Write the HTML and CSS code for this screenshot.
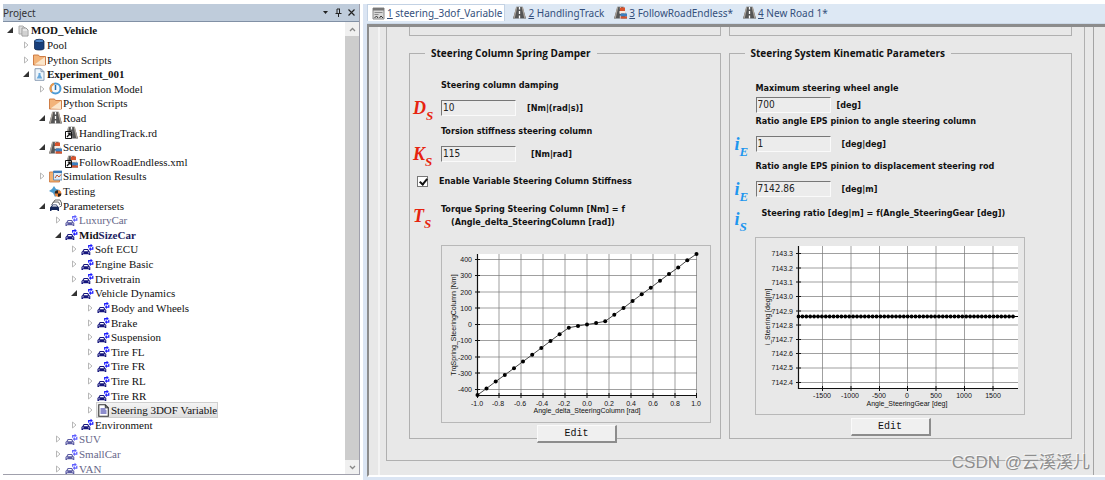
FILE: index.html
```html
<!DOCTYPE html>
<html lang="en">
<head>
<meta charset="utf-8">
<title>steering_3dof_Variable</title>
<link rel="stylesheet" href="styles.css">
</head>
<body>
<svg class="defs" aria-hidden="true">
  <defs>
    <symbol id="open" viewBox="0 0 10 10"><path d="M8 2v6H2z" fill="#333"/></symbol>
    <symbol id="closed" viewBox="0 0 10 10"><path d="M3.5 2v6L7 5z" fill="#fff" stroke="#b0b0b0" stroke-width=".9"/></symbol>
    <symbol id="docs" viewBox="0 0 13 13"><path d="M2 2h4l2 2v6H2z" fill="#ddd" stroke="#aaa"/><path d="M5 4h4l2 2v6H5z" fill="#e8e8e8" stroke="#999"/><path d="M7 7v4M9 7v4" stroke="#bbb"/></symbol>
    <symbol id="pool" viewBox="0 0 13 13"><path d="M1.500 3v7.500c0 2 9.500 2 9.500 0V3z" fill="#173f7c" stroke="#12284f" stroke-width=".8"/><ellipse cx="6.250" cy="3" rx="4.700" ry="1.700" fill="#4c86cc" stroke="#12284f" stroke-width=".8"/></symbol>
    <symbol id="folder" viewBox="0 0 13 13"><path d="M.5 2h5l1 1.500h6V12H.5z" fill="#f3b47a" stroke="#c9743a" stroke-width=".9"/><path d="M1.500 11.500L12 4v8z" fill="#fbe6cb"/></symbol>
    <symbol id="exp" viewBox="0 0 13 13"><path d="M2 .7h6l3 3v8.600H2z" fill="#eef5fb" stroke="#8a9db5"/><path d="M8 .7v3h3" fill="none" stroke="#8a9db5"/><path d="M5.500 5h2v2l1.800 3.500h-5.600L5.500 7z" fill="#6aa9dc"/></symbol>
    <symbol id="sim" viewBox="0 0 13 13"><circle cx="6.500" cy="6.500" r="5" fill="#f5f9fc" stroke="#4c9bd6" stroke-width="2"/><path d="M3 10A5 5 0 0 1 5 1.700" fill="none" stroke="#ef9a4a" stroke-width="2"/><path d="M6.500 3v5" stroke="#2a6fae" stroke-width="1.500"/></symbol>
    <symbol id="road" viewBox="0 0 13 13"><path d="M3.500.8h6L13 12.500H0z" fill="#555"/><path d="M3.700 1L1 12.500M9.300 1L12 12.500" stroke="#a9a29a" stroke-width="1.300"/><path d="M6.500 1v2.500M6.500 5v3M6.500 9.500v3" stroke="#fff" stroke-width="1.300"/></symbol>
    <symbol id="roadlink" viewBox="0 0 13 13"><use href="#road"/><path d="M.5 5.500h6v7h-6z" fill="#fff" stroke="#111"/><path d="M2 11l3-3.500M2.800 7.200H5.200V9.800" fill="none" stroke="#111" stroke-width="1.200"/></symbol>
    <symbol id="scen" viewBox="0 0 13 13"><use href="#road"/><path d="M6 1.500h5v3.500H6z" fill="#d9532c"/><path d="M5.500 5H11.500v2.500H5.500z" fill="#f7e9df"/><path d="M6.500 7.500h6.500v3H6.500z" fill="#3b7fc0"/><path d="M6.500 10.500h6.500v2H6.500z" fill="#d9532c"/></symbol>
    <symbol id="scenlink" viewBox="0 0 13 13"><use href="#scen"/><path d="M.5 5.500h6v7h-6z" fill="#fff" stroke="#111"/><path d="M2 11l3-3.500M2.800 7.200H5.200V9.800" fill="none" stroke="#111" stroke-width="1.200"/></symbol>
    <symbol id="results" viewBox="0 0 13 13"><path d="M.5 2h5l1 1.500h4V12H.5z" fill="#f2b070" stroke="#c9743a" stroke-width=".8"/><path d="M4.500 1H13v9H4.500z" fill="#dcebf7" stroke="#4b7fb0" stroke-width=".8"/><path d="M4.500 1H13v2H4.500z" fill="#3d79b5"/><path d="M6 8l2-3 2 2 2-2.500" fill="none" stroke="#c0552a"/></symbol>
    <symbol id="test" viewBox="0 0 13 13"><path d="M0 6l3-2 2-3 2 3 4 1-2 4-3 3-2-4z" fill="#4b9cd0"/><circle cx="9" cy="8.500" r="3.300" fill="#e8823a"/><path d="M9 8.500V5.200A3.300 3.300 0 0 0 5.700 8.500zM9 8.500v3.300a3.300 3.300 0 0 0 3.300-3.300z" fill="#222"/></symbol>
    <symbol id="cars" viewBox="0 0 13 13"><path d="M4 4l2-3h5l1.500 3v3l-2 1M2.500 6l2-3h5l1.500 3" fill="none" stroke="#666"/><path d="M2 7.500L3.500 5.500h4L9 7.500l1 1V12H8.500v-1h-6v1H1V8.500z" fill="#15275a"/><path d="M3 7.500l1-1.200h3.200l1 1.200z" fill="#fff"/></symbol>
    <symbol id="car" viewBox="0 0 14 14"><path d="M1.500 9L3 6.500h4.500L9 9l1 .8V13H8.300v-.8H2.200V13H.5V9.800z" fill="#15157c"/><path d="M2.700 9l1-1.500h3.100l1 1.500z" fill="#fff"/><path d="M1.500 10.600h1.300M7.700 10.600H9" stroke="#fff"/><path d="M8.300 5V2.800h2.500M12.700 4v2.500h-2.500" fill="none" stroke="#1a1aff" stroke-width="1.300"/><path d="M10.300.8v4l2.400-2zM10.700 4.500v4L8.300 6.500z" fill="#1a1aff"/></symbol>
    <symbol id="page" viewBox="0 0 13 13"><path d="M1.800.8h6.500l3 3v8.500H1.800z" fill="#fff" stroke="#333" stroke-width="1.100"/><path d="M8.300.8v3h3" fill="none" stroke="#333"/><path d="M3.500 5h5M3.500 7h6M3.500 9h6" stroke="#1a1a9a"/></symbol>
    <symbol id="form" viewBox="0 0 13 13"><path d="M1 1h11v11H1z" fill="#d8d8d8" stroke="#888"/><path d="M1 1h11v2.500H1z" fill="#777"/><path d="M2.500 5.500h8M2.500 7.500h4" stroke="#888"/><path d="M2.500 11l2-2 1.500 2M7.500 11l1.500-2 2 2" fill="none" stroke="#333"/></symbol>
  </defs>
</svg>
<div class="app">
  <aside class="project">
    <header class="project-head"><h1>Project</h1>
      <button aria-label="Menu"><svg viewBox="0 0 9 9"><path d="M2 3h5L4.500 6z" fill="#222"/></svg></button>
      <button aria-label="Pin"><svg viewBox="0 0 9 9"><path d="M3 1v4M5.500 1v4M3 1h3M1.500 5.500h6M4.500 5.500V9" stroke="#222" fill="none"/></svg></button>
      <button aria-label="Close"><svg viewBox="0 0 9 9"><path d="M1.500 1.500l6 6M7.500 1.500l-6 6" stroke="#222" stroke-width="1.200"/></svg></button>
    </header>
    <div class="project-body">
      <ul class="tree" role="tree">
        <li class="l1 bold"><svg class="arrow"><use href="#open"/></svg><svg class="icon"><use href="#docs"/></svg><span>MOD_Vehicle</span></li>
        <li class="l2"><svg class="arrow"><use href="#closed"/></svg><svg class="icon"><use href="#pool"/></svg><span>Pool</span></li>
        <li class="l2"><svg class="arrow"><use href="#closed"/></svg><svg class="icon"><use href="#folder"/></svg><span>Python Scripts</span></li>
        <li class="l2 bold"><svg class="arrow"><use href="#open"/></svg><svg class="icon"><use href="#exp"/></svg><span>Experiment_001</span></li>
        <li class="l3"><svg class="arrow"><use href="#closed"/></svg><svg class="icon"><use href="#sim"/></svg><span>Simulation Model</span></li>
        <li class="l3"><svg class="arrow"></svg><svg class="icon"><use href="#folder"/></svg><span>Python Scripts</span></li>
        <li class="l3"><svg class="arrow"><use href="#open"/></svg><svg class="icon"><use href="#road"/></svg><span>Road</span></li>
        <li class="l4"><svg class="arrow"></svg><svg class="icon"><use href="#roadlink"/></svg><span>HandlingTrack.rd</span></li>
        <li class="l3"><svg class="arrow"><use href="#open"/></svg><svg class="icon"><use href="#scen"/></svg><span>Scenario</span></li>
        <li class="l4"><svg class="arrow"></svg><svg class="icon"><use href="#scenlink"/></svg><span>FollowRoadEndless.xml</span></li>
        <li class="l3"><svg class="arrow"><use href="#closed"/></svg><svg class="icon"><use href="#results"/></svg><span>Simulation Results</span></li>
        <li class="l3"><svg class="arrow"></svg><svg class="icon"><use href="#test"/></svg><span>Testing</span></li>
        <li class="l3"><svg class="arrow"><use href="#open"/></svg><svg class="icon"><use href="#cars"/></svg><span>Parametersets</span></li>
        <li class="l4 dim"><svg class="arrow"><use href="#closed"/></svg><svg class="icon"><use href="#car"/></svg><span>LuxuryCar</span></li>
        <li class="l4 bold"><svg class="arrow"><use href="#open"/></svg><svg class="icon"><use href="#car"/></svg><span>Mid<span class="navy">SizeCar</span></span></li>
        <li class="l5"><svg class="arrow"><use href="#closed"/></svg><svg class="icon"><use href="#car"/></svg><span>Soft ECU</span></li>
        <li class="l5"><svg class="arrow"><use href="#closed"/></svg><svg class="icon"><use href="#car"/></svg><span>Engine Basic</span></li>
        <li class="l5"><svg class="arrow"><use href="#closed"/></svg><svg class="icon"><use href="#car"/></svg><span>Drivetrain</span></li>
        <li class="l5"><svg class="arrow"><use href="#open"/></svg><svg class="icon"><use href="#car"/></svg><span>Vehicle Dynamics</span></li>
        <li class="l6"><svg class="arrow"><use href="#closed"/></svg><svg class="icon"><use href="#car"/></svg><span>Body and Wheels</span></li>
        <li class="l6"><svg class="arrow"><use href="#closed"/></svg><svg class="icon"><use href="#car"/></svg><span>Brake</span></li>
        <li class="l6"><svg class="arrow"><use href="#closed"/></svg><svg class="icon"><use href="#car"/></svg><span>Suspension</span></li>
        <li class="l6"><svg class="arrow"><use href="#closed"/></svg><svg class="icon"><use href="#car"/></svg><span>Tire FL</span></li>
        <li class="l6"><svg class="arrow"><use href="#closed"/></svg><svg class="icon"><use href="#car"/></svg><span>Tire FR</span></li>
        <li class="l6"><svg class="arrow"><use href="#closed"/></svg><svg class="icon"><use href="#car"/></svg><span>Tire RL</span></li>
        <li class="l6"><svg class="arrow"><use href="#closed"/></svg><svg class="icon"><use href="#car"/></svg><span>Tire RR</span></li>
        <li class="l6"><svg class="arrow"><use href="#closed"/></svg><span class="selected"><svg class="icon"><use href="#page"/></svg><span>Steering 3DOF Variable</span></span></li>
        <li class="l5"><svg class="arrow"><use href="#closed"/></svg><svg class="icon"><use href="#car"/></svg><span>Environment</span></li>
        <li class="l4 dim"><svg class="arrow"><use href="#closed"/></svg><svg class="icon"><use href="#car"/></svg><span>SUV</span></li>
        <li class="l4 dim"><svg class="arrow"><use href="#closed"/></svg><svg class="icon"><use href="#car"/></svg><span>SmallCar</span></li>
        <li class="l4 dim"><svg class="arrow"><use href="#closed"/></svg><svg class="icon"><use href="#car"/></svg><span>VAN</span></li>
      </ul>
      <div class="scrollbar">
        <button aria-label="Scroll up"><svg viewBox="0 0 9 9"><path d="M2 6l2.500-2.500L7 6" fill="none" stroke="#888" stroke-width="1.300"/></svg></button>
        <button aria-label="Scroll down"><svg viewBox="0 0 9 9"><path d="M2 3l2.500 2.500L7 3" fill="none" stroke="#888" stroke-width="1.300"/></svg></button>
      </div>
    </div>
  </aside>

  <main class="editor">
    <nav class="tabs">
      <a class="tab active" href="#"><svg class="icon"><use href="#form"/></svg><span><u>1</u> steering_3dof_Variable</span></a>
      <a class="tab" href="#"><svg class="icon"><use href="#road"/></svg><span><u>2</u> HandlingTrack</span></a>
      <a class="tab" href="#"><svg class="icon"><use href="#scen"/></svg><span><u>3</u> FollowRoadEndless*</span></a>
      <a class="tab" href="#"><svg class="icon"><use href="#road"/></svg><span><u>4</u> New Road 1*</span></a>
    </nav>
    <div class="view">
      <div class="sheet">
        <div class="frame">
          <div class="cell stub"></div>
          <div class="cell stub"></div>
          <fieldset class="cell">
            <legend>Steering Column Spring Damper</legend>
            <div class="fields first">
              <label class="caption" for="damping">Steering column damping</label>
              <div class="row"><span class="sym red">D<sub>S</sub></span><input id="damping" value="10"><span class="unit">[Nm|(rad|s)]</span></div>
              <label class="caption" for="torsion">Torsion stiffness steering column</label>
              <div class="row"><span class="sym red">K<sub>S</sub></span><input id="torsion" value="115"><span class="unit wide">[Nm|rad]</span></div>
              <label class="check"><input type="checkbox" checked>Enable Variable Steering Column Stiffness</label>
              <div class="row formula"><span class="sym red">T<sub>S</sub></span><p>Torque Spring Steering Column [Nm] = f<br><span class="indent">(Angle_delta_SteeringColumn [rad])</span></p></div>
            </div>
            <div class="plot">
              <svg width="268" height="176" viewBox="1 1 268 176" role="img" aria-label="Torque spring characteristic">
                <defs><marker id="dot" markerUnits="userSpaceOnUse" markerWidth="6" markerHeight="6" refX="3" refY="3"><circle cx="3" cy="3" r="2" fill="#000"/></marker></defs>
                <path d="M36 9h220v141H36z" fill="#fff"/>
                <path d="M58 9v141M80 9v141M102 9v141M124 9v141M146 9v141M168 9v141M190 9v141M212 9v141M234 9v141M255.500 9v141M36 14.500h220M36 30.500h220M36 47h220M36 63h220M36 79.500h220M36 95.500h220M36 112h220M36 128h220M36 144.500h220" stroke="#777" stroke-width=".7"/>
                <path d="M36.500 9v142M36 150.500h220" stroke="#111" stroke-width="1.200"/>
                <path d="M34 14.500h5M34 30.500h5M34 47h5M34 63h5M34 79.500h5M34 95.500h5M34 112h5M34 128h5M34 144.500h5M36.500 148v5M58 148v5M80 148v5M102 148v5M124 148v5M146 148v5M168 148v5M190 148v5M212 148v5M234 148v5M255.500 148v5" stroke="#111"/>
                <polyline points="36.500,150 45.500,143.500 54.700,136.500 63.800,130 73,123.200 82,116.500 91.200,109.800 100.300,103 109.500,96 118.600,89.200 127.800,82.700 137,81 146,79.500 155.100,78 164.200,76.300 173.300,69.700 182.500,63 191.600,56 200.700,49.300 209.800,42.700 219,35.700 228,29 237.200,22.500 246.300,15.300 255.500,9" fill="none" stroke="#333" stroke-width=".9" marker-start="url(#dot)" marker-mid="url(#dot)" marker-end="url(#dot)"/>
                <g text-anchor="end"><text x="31" y="17">400</text><text x="31" y="33">300</text><text x="31" y="50">200</text><text x="31" y="66">100</text><text x="31" y="82">0</text><text x="31" y="98">-100</text><text x="31" y="115">-200</text><text x="31" y="131">-300</text><text x="31" y="147">-400</text></g>
                <g text-anchor="middle"><text x="36" y="161">-1.0</text><text x="57" y="161">-0.8</text><text x="79" y="161">-0.6</text><text x="101" y="161">-0.4</text><text x="123" y="161">-0.2</text><text x="146" y="161">0.0</text><text x="168" y="161">0.2</text><text x="190" y="161">0.4</text><text x="212" y="161">0.6</text><text x="234" y="161">0.8</text><text x="255" y="161">1.0</text>
                <text x="146" y="168">Angle_delta_SteeringColumn [rad]</text><text transform="translate(15 80) rotate(-90)">TrqSpring_SteeringColumn [Nm]</text></g>
              </svg>
            </div>
            <button class="edit">Edit</button>
          </fieldset>
          <fieldset class="cell">
            <legend>Steering System Kinematic Parameters</legend>
            <div class="fields second">
              <label class="caption" for="maxangle">Maximum steering wheel angle</label>
              <div class="row short"><span class="sym"></span><input id="maxangle" value="700"><span class="unit near">[deg]</span></div>
              <label class="caption" for="ratio1">Ratio angle EPS pinion to angle steering column</label>
              <div class="row"><span class="sym blue">i<sub>E</sub></span><input id="ratio1" value="1"><span class="unit">[deg|deg]</span></div>
              <label class="caption" for="ratio2">Ratio angle EPS pinion to displacement steering rod</label>
              <div class="row"><span class="sym blue">i<sub>E</sub></span><input id="ratio2" value="7142.86"><span class="unit">[deg|m]</span></div>
              <div class="row formula"><span class="sym blue">i<sub>S</sub></span><p>Steering ratio [deg|m] = f(Angle_SteeringGear [deg])</p></div>
            </div>
            <div class="plot">
              <svg width="268" height="176" viewBox="1 1 268 176" role="img" aria-label="Steering ratio characteristic">
                <path d="M43 9h220v142H43z" fill="#fff"/>
                <path d="M67.500 9v142M96 9v142M124.500 9v142M152.500 9v142M181 9v142M209.500 9v142M238 9v142M43 16.500h220M43 31h220M43 45h220M43 59.500h220M43 74h220M43 88h220M43 102.500h220M43 116.500h220M43 131h220M43 145.500h220" stroke="#777" stroke-width=".7"/>
                <path d="M43.500 9v143M43 151.500h220" stroke="#111" stroke-width="1.200"/>
                <path d="M41 16.500h5M41 31h5M41 45h5M41 59.500h5M41 74h5M41 88h5M41 102.500h5M41 116.500h5M41 131h5M41 145.500h5M67.500 149v5M96 149v5M124.500 149v5M152.500 149v5M181 149v5M209.500 149v5M238 149v5" stroke="#111"/>
                <path d="M42 79.500h221" stroke="#000"/>
                <path d="M43.500 79.500h218" stroke="#000" stroke-width="3.800" stroke-linecap="round" stroke-dasharray="0 3.900"/>
                <g text-anchor="end"><text x="38" y="19">7143.3</text><text x="38" y="34">7143.2</text><text x="38" y="48">7143.1</text><text x="38" y="62">7143.0</text><text x="38" y="77">7142.9</text><text x="38" y="91">7142.8</text><text x="38" y="105">7142.7</text><text x="38" y="119">7142.6</text><text x="38" y="133">7142.5</text><text x="38" y="148">7142.4</text></g>
                <g text-anchor="middle"><text x="67" y="161">-1500</text><text x="95" y="161">-1000</text><text x="124" y="161">-500</text><text x="152" y="161">0</text><text x="181" y="161">500</text><text x="209" y="161">1000</text><text x="238" y="161">1500</text>
                <text x="152" y="169">Angle_SteeringGear [deg]</text><text transform="translate(15 80) rotate(-90)">i_Steering [deg|m]</text></g>
              </svg>
            </div>
            <button class="edit">Edit</button>
          </fieldset>
        </div>
      </div>
    </div>
  </main>
  <div class="watermark">CSDN @云溪溪儿</div>
</div>
</body>
</html>
```

FILE: styles.css
```css
* { box-sizing: border-box; }
body { margin: 0; background: #fff; }
button { padding: 0; border: 0; background: none; }
ul, p, h1 { margin: 0; padding: 0; }
.defs { display: none; }

.app {
  position: relative;
  display: flex;
  height: 100vh;
  min-height: 480px;
  padding-top: 4px;
  overflow: hidden;
}

/* Project tree */
.project {
  display: flex;
  flex-direction: column;
  flex: 0 0 357px;
  margin: 0 3px 5px 3px;
  border-right: 1px solid #a0a0ac;
  border-bottom: 1px solid #a0a0ac;
}
.project-head {
  display: flex;
  align-items: center;
  gap: 4px;
  height: 18px;
  padding-right: 3px;
  background: #bfccdb;
  border-bottom: 1px solid #8190a5;
}
.project-head h1 {
  flex: 1;
  font: 400 10px/16px "Noto Sans", sans-serif;
  color: #333;
}
.project-head button { width: 9px; height: 9px; }
.project-head svg, .scrollbar svg { display: block; width: 9px; height: 9px; }
.project-body { display: flex; flex: 1; min-height: 0; overflow: hidden; }
.tree {
  display: grid;
  grid-auto-rows: 1fr;
  flex: 1;
  margin: 1px 0 -2px;
  list-style: none;
  font: 11px/14px "Liberation Serif", serif;
  color: #111;
}
.tree li { display: flex; align-items: center; white-space: nowrap; }
.arrow { width: 10px; height: 10px; margin-right: 2px; flex: none; }
.icon { width: 13px; height: 13px; margin-right: 1px; flex: none; }
.l1 { padding-left: 2px; }
.l2 { padding-left: 18px; }
.l3 { padding-left: 34px; }
.l4 { padding-left: 50px; }
.l5 { padding-left: 66px; }
.l6 { padding-left: 82px; }
.bold { font-weight: 700; }
.navy { color: #202060; }
.dim { color: #666688; }
.dim .icon { opacity: 0.7; }
.selected {
  display: flex;
  align-items: center;
  height: 14px;
  outline: 1px solid #cfcfcf;
  background: linear-gradient(#f4f4f4, #dedede);
}
.scrollbar {
  display: flex;
  flex-direction: column;
  justify-content: space-between;
  width: 14px;
  background: #cdcdcd;
}
.scrollbar button {
  display: grid;
  place-items: center;
  height: 14px;
  background: #f0f0f0;
}

/* Editor */
.editor {
  display: flex;
  flex-direction: column;
  flex: 1;
  min-width: 0;
  padding: 0 0 3px 4px;
  background: #dbe5f3;
}
.tabs {
  display: flex;
  height: 20px;
  padding-bottom: 2px;
  background: #dde8f4;
  border-bottom: 1px solid #ccd9e8;
}
.tab {
  display: flex;
  align-items: center;
  gap: 1px;
  padding: 0 2px 0 8px;
  font: 10px/16px "Noto Sans", sans-serif;
  color: #34507c;
  text-decoration: none;
  white-space: nowrap;
}
.tab.active { padding-left: 4px; background: #fff; border: 1px solid #c3d2e4; border-bottom: 0; }
.view {
  flex: 1;
  min-height: 0;
  overflow: hidden;
  padding-left: 9px;
  background: #e8e8e8;
  border-top: 3px solid #8c8c8c;
  border-left: 2px solid #8c8c8c;
  border-bottom: 2px solid #fff;
}
.sheet {
  height: 100%;
  margin-right: 11px;
  padding: 0 8px 14px 6px;
  border-left: 2px solid #f4f4f4;
  border-right: 1px solid #a4a4a4;
}
.frame {
  display: grid;
  grid-template-columns: 312fr 344fr;
  grid-template-rows: 9px 1fr;
  gap: 11px 8px;
  height: 100%;
  padding: 0 12px 22px;
  padding-left: 22px;
  border: 1px solid #b0b0b0;
  border-top: 0;
}
.cell { min-width: 0; margin: 0; padding: 0; border: 1px solid #b0b0b0; }
.stub { border-top: 0; }

fieldset.cell { display: flex; flex-direction: column; }
legend {
  margin-left: 15px;
  padding: 0 6px;
}
legend, .caption, .unit, .check, .formula p {
  font: 700 9px/12px "DejaVu Sans Condensed", "DejaVu Sans", sans-serif;
  color: #111;
  white-space: nowrap;
}
legend { font: 700 10px/12px "Open Sans", sans-serif; }
.fields { display: flex; flex-direction: column; }
.first { padding: 20px 0 0 3px; }
.second { padding: 23px 0 0 4px; }
.caption { margin-left: 28px; }
.second .caption { margin-left: 22px; }
.row { display: flex; align-items: center; height: 24px; margin: 5px 0; }
.second .row { margin: 5px 0 4px; }
.second .row.short { height: 16px; margin: 3px 0 2px; }
.sym {
  width: 28px;
  font: italic 700 18px/20px "Liberation Serif", serif;
}
.second .sym { width: 22px; padding-left: 1px; }
.sym sub { font-size: 13px; line-height: 0; vertical-align: -6px; }
.red { color: #e6230f; }
.blue { color: #1e96ee; }
.row input {
  width: 75px;
  height: 16px;
  padding: 0 1px 1px;
  font: 10px/12px "DejaVu Sans Condensed", "DejaVu Sans", sans-serif;
  color: #222;
  background: #ececec;
  border: 1px solid;
  border-color: #777 #fafafa #fafafa #777;
}
.unit { margin-left: 11px; }
.unit.wide { margin-left: 15px; }
.unit.near { margin-left: 6px; }
.check { display: flex; align-items: center; margin: 4px 0 0 3px; }
.check input {
  appearance: none;
  width: 11px;
  height: 11px;
  margin: 0 11px 0 1px;
  background: #fff;
  border: 1px solid #777;
}
.check input::before {
  content: "";
  display: block;
  width: 3px;
  height: 6px;
  margin: 0 0 0 3px;
  border: solid #111;
  border-width: 0 2px 2px 0;
  transform: rotate(40deg);
}
.first .formula { height: 26px; margin: 16px 0 16px; }
.first .formula p { line-height: 13px; }
.indent { margin-left: 10px; }
.second .formula { margin: 2px 0 6px; }
.second .formula p { align-self: flex-start; margin-left: 6px; }

.plot {
  align-self: flex-start;
  margin-left: 31px;
  border: 1px solid #b8b8b8;
}
.second + .plot { margin-left: 25px; }
.plot svg { display: block; }
.plot text { font: 7px "Liberation Sans", sans-serif; fill: #111; }
.edit {
  align-self: flex-start;
  width: 80px;
  height: 18px;
  margin: 2px 0 -5px 127px;
  font: 10px/14px "Liberation Mono", monospace;
  color: #111;
  background: #f0f0f0;
  border: solid;
  border-width: 1px 2px 2px 1px;
  border-color: #fafafa #8c8c8c #8c8c8c #fafafa;
}
.second ~ .edit { margin: 3px 0 0 121px; }

.watermark {
  position: absolute;
  right: 15px;
  bottom: 5px;
  font: 17px/24px "Liberation Sans", "Noto Sans CJK SC", sans-serif;
  color: #8e8e8e;
  text-shadow: -1px -1px 0 #f8f8f8;
}
```
